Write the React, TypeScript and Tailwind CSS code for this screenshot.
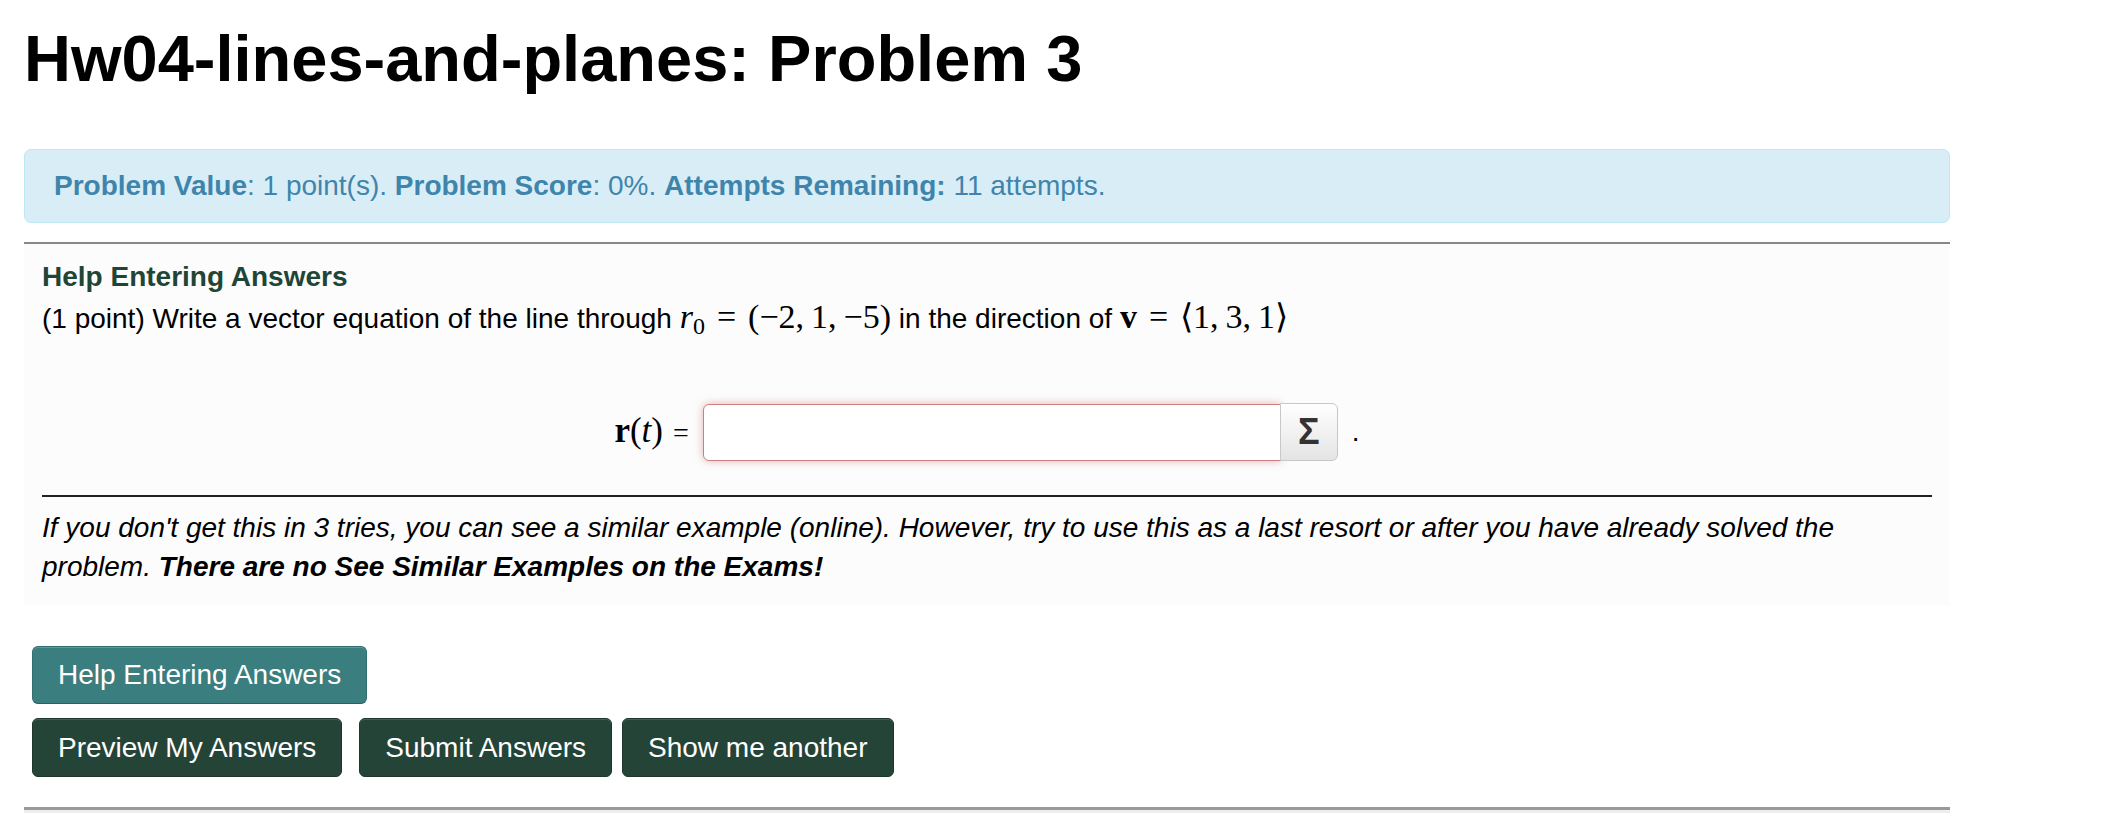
import React from "react";

const sans = { fontFamily: '"Liberation Sans", Arial, Helvetica, sans-serif' } as const;
const serif = { fontFamily: '"Liberation Serif", "Times New Roman", serif' } as const;

export default function App() {
  return (
    <div className="bg-white text-black min-h-[816px]" style={sans}>
      <div className="w-[1926px] ml-[24px]">
        <h1 className="pt-[26px] text-[65px] leading-[65px] font-bold text-black">
          Hw04-lines-and-planes: Problem 3
        </h1>

        <div className="mt-[58px] h-[74px] border border-[#bce8f1] bg-[#d9edf7] rounded-[7px] px-[29px] flex items-center text-[28px] leading-[40px] text-[#3f85ab]">
          <span>
            <b>Problem Value</b>: 1 point(s). <b>Problem Score</b>: 0%. <b>Attempts Remaining:</b> 11 attempts.
          </span>
        </div>

        <div className="mt-[19px] border-t-2 border-[#888888] bg-[#fcfcfc] px-[18px] pt-[12px] pb-[20px]">
          <div className="text-[28px] leading-[42px] font-bold text-[#1f4536]">Help Entering Answers</div>
          <div className="text-[28px] leading-[42px] text-black whitespace-nowrap">
            (1 point) Write a vector equation of the line through{" "}
            <span className="text-[34px] leading-[30px]" style={serif}>
              <i>r</i>
              <span className="text-[24px] relative top-[6px]">0</span>
              <span className="mx-[12px]">=</span>(−2,<span className="ml-[7px]">1,</span>
              <span className="ml-[7px]">−5)</span>
            </span>{" "}
            in the direction of{" "}
            <span className="text-[34px] leading-[30px]" style={serif}>
              <b>v</b>
              <span className="mx-[12px]">=</span>⟨1,<span className="ml-[7px]">3,</span>
              <span className="ml-[7px]">1⟩</span>
            </span>
          </div>

          <div className="mt-[63px] flex items-center justify-center">
            <span className="text-[35px] leading-[40px] mr-[14px] whitespace-nowrap" style={serif}>
              <b>r</b>(<i>t</i>)<span className="ml-[10px] text-[28px]">=</span>
            </span>
            <div className="w-[578px] h-[57px] bg-white border border-[#cd7f7f] rounded-l-[6px] shadow-[0_0_8px_rgba(210,120,120,0.55)]" />
            <div className="w-[58px] h-[58px] -ml-px flex items-center justify-center border border-[#c8c8c8] rounded-r-[6px] bg-gradient-to-b from-white to-[#e4e4e4] text-[#333333] text-[36px] font-bold">
              Σ
            </div>
            <span className="ml-[14px] text-[28px] leading-[40px]">.</span>
          </div>

          <div className="mt-[34px] border-t-2 border-[#222222]" />

          <p className="mt-[11px] text-[28px] leading-[39px] italic text-black">
            If you don't get this in 3 tries, you can see a similar example (online). However, try to use this as a last resort or after you have already solved the problem.{" "}
            <b>There are no See Similar Examples on the Exams!</b>
          </p>
        </div>

        <div className="mt-[40px] ml-[8px] flex flex-col gap-[14px]">
          <div>
            <button className="h-[58px] px-[25px] rounded-[6px] bg-[#3a7e80] border border-[#326f71] border-b-[#2b6062] text-white text-[28px] leading-[40px] shadow-[inset_0_1px_0_rgba(255,255,255,0.2)]">
              Help Entering Answers
            </button>
          </div>
          <div className="flex">
            <button className="h-[59px] px-[25px] rounded-[6px] bg-[#254438] border border-[#1d372d] text-white text-[28px] leading-[40px] shadow-[inset_0_1px_0_rgba(255,255,255,0.15)] mr-[17px]">
              Preview My Answers
            </button>
            <button className="h-[59px] px-[25px] rounded-[6px] bg-[#254438] border border-[#1d372d] text-white text-[28px] leading-[40px] shadow-[inset_0_1px_0_rgba(255,255,255,0.15)] mr-[10px]">
              Submit Answers
            </button>
            <button className="h-[59px] px-[25px] rounded-[6px] bg-[#254438] border border-[#1d372d] text-white text-[28px] leading-[40px] shadow-[inset_0_1px_0_rgba(255,255,255,0.15)]">
              Show me another
            </button>
          </div>
        </div>

        <div className="mt-[30px] border-t-[3px] border-[#999999] h-[6px] bg-[#eeeeee]" />
      </div>
    </div>
  );
}
